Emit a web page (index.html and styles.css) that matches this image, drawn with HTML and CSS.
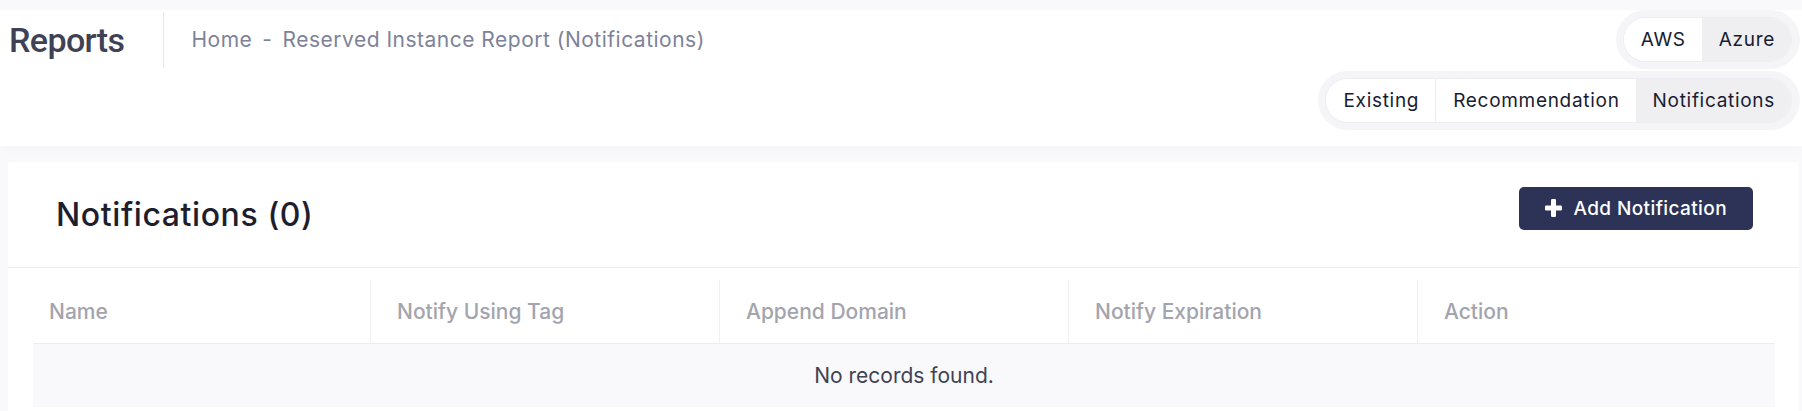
FILE: index.html
```html
<!DOCTYPE html>
<html lang="en">
<head>
<meta charset="utf-8">
<title>Reserved Instance Report (Notifications)</title>
<link rel="stylesheet" href="styles.css">
</head>
<body>
<div class="page">
  <header class="topbar">
    <div class="title-area">
      <h1 class="page-title">Reports</h1>
      <span class="title-divider"></span>
      <nav class="breadcrumb">
        <span class="crumb">Home</span>
        <span class="crumb-sep">-</span>
        <span class="crumb">Reserved Instance Report (Notifications)</span>
      </nav>
    </div>
    <div class="switchers">
      <div class="seg-wrap">
        <div class="seg-group">
          <span class="seg">AWS</span>
          <span class="seg active">Azure</span>
        </div>
      </div>
      <div class="seg-wrap">
        <div class="seg-group">
          <span class="seg">Existing</span>
          <span class="seg bordered">Recommendation</span>
          <span class="seg active">Notifications</span>
        </div>
      </div>
    </div>
  </header>

  <section class="card">
    <div class="card-header">
      <h2 class="card-title">Notifications (0)</h2>
      <button class="btn-add" type="button">
        <svg class="plus" width="17" height="18" viewBox="0 0 17 18" aria-hidden="true">
          <rect x="6" y="0" width="5" height="18" rx="1.2" fill="#fff"/>
          <rect x="0" y="6.5" width="17" height="5" rx="1.2" fill="#fff"/>
        </svg>
        <span>Add Notification</span>
      </button>
    </div>
    <div class="card-body">
      <div class="grid-table">
        <div class="th first">Name</div>
        <div class="th">Notify Using Tag</div>
        <div class="th">Append Domain</div>
        <div class="th">Notify Expiration</div>
        <div class="th last">Action</div>
        <div class="empty-row">No records found.</div>
      </div>
    </div>
  </section>
</div>
</body>
</html>
```

FILE: styles.css
```css
* {
  box-sizing: border-box;
}

html, body {
  margin: 0;
  padding: 0;
}

body {
  background: #f9f9fc;
  font-family: "Inter", "Liberation Sans", sans-serif;
  color: #181c32;
  width: 1802px;
  height: 411px;
  overflow: hidden;
}

.page {
  padding-top: 10px;
}

/* ---------- Top bar ---------- */
.topbar {
  background: #ffffff;
  height: 136px;
  display: flex;
  justify-content: space-between;
  align-items: flex-start;
  padding: 0 2px 0 9px;
  box-shadow: 0 4px 10px rgba(30, 30, 60, 0.02);
}

.title-area {
  display: flex;
  align-items: flex-start;
}

.page-title {
  margin: 10px 0 0 0;
  font-family: "Roboto", "Liberation Sans", sans-serif;
  font-weight: 500;
  font-size: 34px;
  line-height: 40px;
  letter-spacing: -0.6px;
  color: #3f4254;
}

.title-divider {
  display: block;
  width: 1px;
  height: 56px;
  margin: 2px 0 0 39px;
  background: #e4e6ef;
}

.breadcrumb {
  display: flex;
  align-items: baseline;
  margin: 18px 0 0 27px;
  font-size: 21px;
  line-height: 24px;
  letter-spacing: 0.5px;
  color: #7e8299;
}

.crumb-sep {
  margin: 0 10px;
}

/* ---------- Segmented switchers ---------- */
.switchers {
  display: flex;
  flex-direction: column;
  align-items: flex-end;
  gap: 2px;
}

.seg-wrap {
  background: #f5f5f8;
  border-radius: 32px;
  padding: 7px 8px 7px 7px;
}

.seg-group {
  display: flex;
  height: 45px;
  border: 1px solid #ebedf3;
  border-radius: 23px;
  overflow: hidden;
  background: #ffffff;
}

.seg {
  display: flex;
  align-items: center;
  padding: 0 16px 0 17px;
  font-size: 19px;
  letter-spacing: 0.7px;
  color: #181c32;
  background: #ffffff;
}

.seg.bordered {
  border-left: 1px solid #ebedf3;
}

.seg.active {
  background: #efeff1;
}

/* ---------- Card ---------- */
.card {
  background: #ffffff;
  margin: 16px 3px 0 8px;
  border-radius: 2px;
  height: 260px;
}

.card-header {
  height: 106px;
  display: flex;
  justify-content: space-between;
  align-items: center;
  padding: 0 46px 0 48px;
  border-bottom: 1px solid #ebedf3;
}

.card-title {
  margin: 0;
  font-size: 32px;
  font-weight: 500;
  line-height: 40px;
  letter-spacing: 0.6px;
  color: #1e1e2d;
}

.btn-add {
  display: flex;
  align-items: center;
  gap: 11px;
  height: 43px;
  margin-top: -13px;
  padding: 0 26px;
  border: none;
  border-radius: 5px;
  background: #2c3357;
  color: #ffffff;
  font-family: "Inter", "Liberation Sans", sans-serif;
  font-size: 19px;
  font-weight: 500;
  letter-spacing: 0.4px;
}

.plus {
  display: block;
}

.card-body {
  padding: 12px 24px 0 25px;
}

.grid-table {
  display: grid;
  grid-template-columns: 338px 349px 349px 349px 1fr;
}

.th {
  height: 64px;
  display: flex;
  align-items: center;
  padding-left: 26px;
  font-size: 21px;
  font-weight: 500;
  color: #a3a4ad;
  border-bottom: 1px solid #ebedf3;
  border-right: 1px solid #f1f1f4;
}

.th.first {
  padding-left: 16px;
}

.th.last {
  border-right: none;
}

.empty-row {
  grid-column: 1 / -1;
  height: 63px;
  display: flex;
  align-items: center;
  justify-content: center;
  background: #f9f9fb;
  font-size: 21px;
  color: #3f4254;
}
```
